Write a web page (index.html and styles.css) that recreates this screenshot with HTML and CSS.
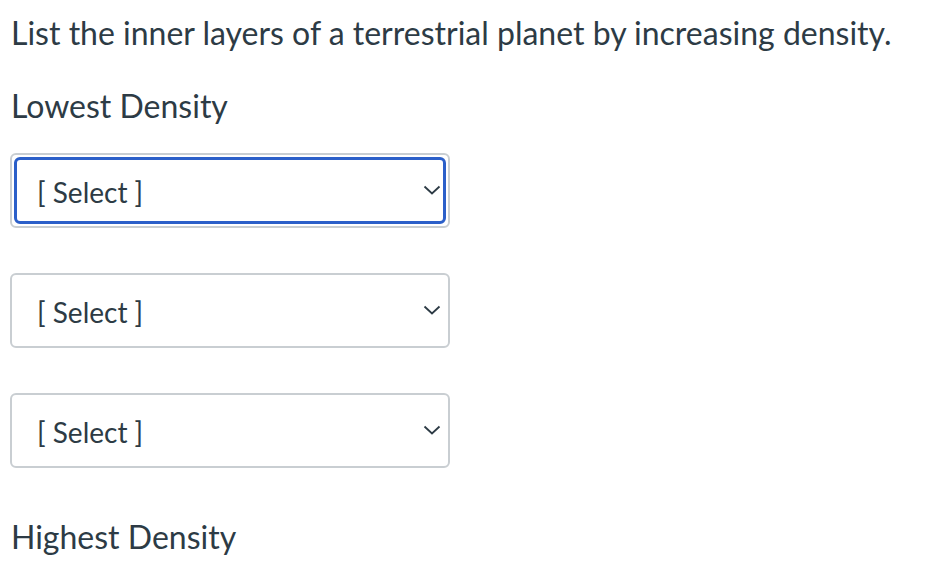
FILE: index.html
```html
<!DOCTYPE html>
<html lang="en">
<head>
  <meta charset="UTF-8">
  <meta name="viewport" content="width=device-width, initial-scale=1.0">
  <title>Quiz Question</title>
  <link rel="stylesheet" href="styles.css">
</head>
<body>

  <!-- Question -->
  <div class="question">
    <p class="question-text">List the inner layers of a terrestrial planet by increasing density.</p>
    <p class="label label-top">Lowest Density</p>

    <div class="answers">
      <div class="select focused">
        <span class="select-text">[ Select ]</span>
        <svg class="chevron" width="18" height="10" viewBox="0 0 18 10"><path d="M1.5 1.5 L9 8.5 L16.5 1.5" /></svg>
      </div>
      <div class="select">
        <span class="select-text">[ Select ]</span>
        <svg class="chevron" width="18" height="10" viewBox="0 0 18 10"><path d="M1.5 1.5 L9 8.5 L16.5 1.5" /></svg>
      </div>
      <div class="select">
        <span class="select-text">[ Select ]</span>
        <svg class="chevron" width="18" height="10" viewBox="0 0 18 10"><path d="M1.5 1.5 L9 8.5 L16.5 1.5" /></svg>
      </div>
    </div>

    <p class="label label-bottom">Highest Density</p>
  </div>

</body>
</html>
```

FILE: styles.css
```css
/* Basic Reset */
* {
  margin: 0;
  padding: 0;
  box-sizing: border-box;
}

body {
  background-color: #fff;
  color: #2d3b45;
  font-family: 'Lato', 'Liberation Sans', sans-serif;
}

/* Question */
.question {
  padding: 15px 0 0 11px;
}

.question-text,
.label {
  font-size: 32px;
  line-height: 36px;
}

.label-top {
  margin-top: 37px;
}

.label-bottom {
  margin-top: 51px;
}

/* Dropdowns */
.answers {
  display: flex;
  flex-direction: column;
  gap: 45px;
  margin-top: 29px;
  margin-left: -1px;
}

.select {
  display: flex;
  align-items: center;
  justify-content: space-between;
  width: 440px;
  height: 75px;
  padding: 0 7px 0 25px;
  border: 2px solid #c9ced2;
  border-radius: 6px;
  background-color: #fff;
}

/* focus ring sits inside the grey border */
.select.focused {
  position: relative;
}

.select.focused::after {
  content: '';
  position: absolute;
  inset: 2px;
  border: 3px solid #2b5fc9;
  border-radius: 6px;
}

.select-text {
  font-size: 28px;
  margin-top: 2px;
}

.chevron {
  margin-top: -2px;
  fill: none;
  stroke: #2d3b45;
  stroke-width: 1.8;
}
```
